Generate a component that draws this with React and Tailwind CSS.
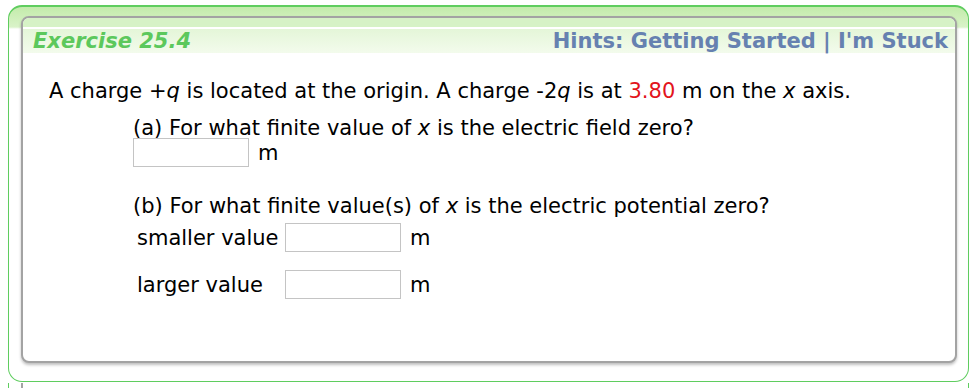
import React from "react";

function Field() {
  return <div className="w-[116px] h-[29px] border border-[#c4c4c4] bg-white shrink-0" />;
}

export default function App() {
  return (
    <div className="w-[978px] h-[388px] bg-white overflow-hidden" style={{ fontFamily: '"DejaVu Sans", Verdana, sans-serif' }}>
      <div className="ml-[8px] mt-[5px] w-[961px] h-[377px] border border-t-2 border-[#5fcd5f] rounded-[14px] bg-[linear-gradient(to_bottom,#c3ebab_0px,#d9f3c8_20px,#ffffff_22px,#ffffff_100%)] pt-[9px] pl-[12px] pr-[11px] pb-[18px]">
        <div className="h-full border-2 border-[#a3a3a3] rounded-[8px] bg-white shadow-[0_2px_3px_rgba(0,0,0,0.25)] overflow-hidden flex flex-col">
          <div className="h-[9px] bg-[#d6f2c6]" />
          <div className="h-[2px] bg-white" />
          <div className="h-[24px] bg-[linear-gradient(to_bottom,#e4f6d8,#f3fbec)] flex items-center justify-between pl-[10px] pr-[7px] text-[21px] leading-[22px] font-bold whitespace-nowrap">
            <span className="italic text-[#5cc85c]">Exercise 25.4</span>
            <span className="text-[#6681b0]">Hints: Getting Started | I'm Stuck</span>
          </div>
          <div className="text-[21px] text-black">
            <div className="mt-[27px] pl-[26px] leading-[22px] whitespace-nowrap">
              A charge +<i>q</i> is located at the origin. A charge -2<i>q</i> is at <span className="text-[#e2141c]">3.80</span> m on the <i>x</i> axis.
            </div>
            <div className="pl-[110px]">
              <div className="mt-[16px] leading-[20px] whitespace-nowrap">(a) For what finite value of <i>x</i> is the electric field zero?</div>
              <div className="flex items-center gap-[9px]">
                <Field />
                <span className="leading-[20px]">m</span>
              </div>
              <div className="mt-[29px] leading-[20px] whitespace-nowrap">(b) For what finite value(s) of <i>x</i> is the electric potential zero?</div>
              <div className="mt-[7px] flex items-center">
                <span className="ml-[4px] w-[148px] leading-[20px]">smaller value</span>
                <Field />
                <span className="ml-[9px] leading-[20px]">m</span>
              </div>
              <div className="mt-[18px] flex items-center">
                <span className="ml-[4px] w-[148px] leading-[20px]">larger value</span>
                <Field />
                <span className="ml-[9px] leading-[20px]">m</span>
              </div>
            </div>
          </div>
        </div>
      </div>
      <div className="ml-[8px] mt-[1px] w-[961px] h-[40px] border-l border-r border-[#5fcd5f] pl-[12px]">
        <div className="h-full border-l-2 border-[#a3a3a3]" />
      </div>
    </div>
  );
}
